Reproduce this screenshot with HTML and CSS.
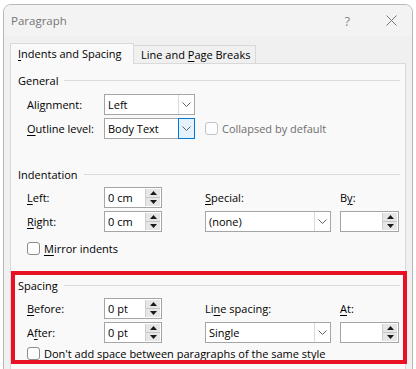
FILE: index.html
```html
<!DOCTYPE html>
<html>
<head>
<meta charset="utf-8">
<title>Paragraph</title>
<link rel="stylesheet" href="styles.css">
</head>
<body>
<div class="window">
	<div class="titlebar">
		<span class="title">Paragraph</span>
		<span class="help">?</span>
		<svg class="close" width="11" height="11" viewBox="0 0 11 11"><path d="M0.5 0.5 L10.5 10.5 M10.5 0.5 L0.5 10.5"/></svg>
	</div>
	<div class="body">
		<div class="tabs">
			<div class="tab active"><u>I</u>ndents and Spacing</div>
			<div class="tab">Line and <u>P</u>age Breaks</div>
		</div>
		<div class="panel">
			<div class="group-head">General</div>
			<div class="rows general">
				<label>Ali<u>g</u>nment:</label>
				<div class="combo">
					<span class="val">Left</span>
					<span class="drop"><svg width="9" height="5" viewBox="0 0 9 5"><path d="M0.5 0.5 L4.5 4.5 L8.5 0.5"/></svg></span>
				</div>
				<span></span>
				<label><u>O</u>utline level:</label>
				<div class="combo">
					<span class="val">Body Text</span>
					<span class="drop focus"><svg width="9" height="5" viewBox="0 0 9 5"><path d="M0.5 0.5 L4.5 4.5 L8.5 0.5"/></svg></span>
				</div>
				<div class="check disabled"><span class="box"></span>Collapsed by default</div>
			</div>

			<div class="group-head indent-head">Indentation</div>
			<div class="rows field">
				<label><u>L</u>eft:</label>
				<div class="spin">
					<span class="val">0 cm</span>
					<span class="btns">
						<span><svg width="7" height="4" viewBox="0 0 7 4"><path d="M0 4 L3.5 0 L7 4 Z"/></svg></span>
						<span><svg width="7" height="4" viewBox="0 0 7 4"><path d="M0 0 L3.5 4 L7 0 Z"/></svg></span>
					</span>
				</div>
				<label><u>S</u>pecial:</label>
				<label>B<u>y</u>:</label>
				<label><u>R</u>ight:</label>
				<div class="spin">
					<span class="val">0 cm</span>
					<span class="btns">
						<span><svg width="7" height="4" viewBox="0 0 7 4"><path d="M0 4 L3.5 0 L7 4 Z"/></svg></span>
						<span><svg width="7" height="4" viewBox="0 0 7 4"><path d="M0 0 L3.5 4 L7 0 Z"/></svg></span>
					</span>
				</div>
				<div class="combo wide">
					<span class="val">(none)</span>
					<span class="drop"><svg width="9" height="5" viewBox="0 0 9 5"><path d="M0.5 0.5 L4.5 4.5 L8.5 0.5"/></svg></span>
				</div>
				<div class="spin small">
					<span class="val"></span>
					<span class="btns">
						<span><svg width="7" height="4" viewBox="0 0 7 4"><path d="M0 4 L3.5 0 L7 4 Z"/></svg></span>
						<span><svg width="7" height="4" viewBox="0 0 7 4"><path d="M0 0 L3.5 4 L7 0 Z"/></svg></span>
					</span>
				</div>
			</div>
			<div class="check mirror"><span class="box"></span><span><u>M</u>irror indents</span></div>

			<div class="spacing">
				<div class="group-head">Spacing</div>
				<div class="rows field">
					<label><u>B</u>efore:</label>
					<div class="spin">
						<span class="val">0 pt</span>
						<span class="btns">
							<span><svg width="7" height="4" viewBox="0 0 7 4"><path d="M0 4 L3.5 0 L7 4 Z"/></svg></span>
							<span><svg width="7" height="4" viewBox="0 0 7 4"><path d="M0 0 L3.5 4 L7 0 Z"/></svg></span>
						</span>
					</div>
					<label>Li<u>n</u>e spacing:</label>
					<label><u>A</u>t:</label>
					<label>A<u>f</u>ter:</label>
					<div class="spin">
						<span class="val">0 pt</span>
						<span class="btns">
							<span><svg width="7" height="4" viewBox="0 0 7 4"><path d="M0 4 L3.5 0 L7 4 Z"/></svg></span>
							<span><svg width="7" height="4" viewBox="0 0 7 4"><path d="M0 0 L3.5 4 L7 0 Z"/></svg></span>
						</span>
					</div>
					<div class="combo wide">
						<span class="val">Single</span>
						<span class="drop"><svg width="9" height="5" viewBox="0 0 9 5"><path d="M0.5 0.5 L4.5 4.5 L8.5 0.5"/></svg></span>
					</div>
					<div class="spin small">
						<span class="val"></span>
						<span class="btns">
							<span><svg width="7" height="4" viewBox="0 0 7 4"><path d="M0 4 L3.5 0 L7 4 Z"/></svg></span>
							<span><svg width="7" height="4" viewBox="0 0 7 4"><path d="M0 0 L3.5 4 L7 0 Z"/></svg></span>
						</span>
					</div>
				</div>
				<div class="check nospace"><span class="box"></span><span>Don't add spa<u>c</u>e between paragraphs of the same style</span></div>
			</div>
		</div>
	</div>
</div>
</body>
</html>
```

FILE: styles.css
```css
* {
	box-sizing: border-box;
}
body {
	margin: 0;
	background: #fff;
	font-family: "Open Sans", "Noto Sans", sans-serif;
	font-size: 11px;
	color: #000;
	overflow: hidden;
}
u {
	text-underline-offset: 2px;
}
.window {
	margin: 4px 0 0 3px;
	width: 410px;
	height: 380px;
	border: 1px solid #b8b8b8;
	border-radius: 8px 8px 0 0;
	background: #f0f0f0;
	overflow: hidden;
}
.titlebar {
	height: 31px;
	background: #f3f3f3;
	display: flex;
	align-items: center;
	padding: 0 15px 0 7px;
}
.title {
	flex: 1;
	font-size: 11.5px;
	color: #767676;
}
.help {
	color: #8a8a8a;
	font-size: 13px;
	margin-right: 36px;
}
.close path {
	stroke: #777;
	stroke-width: 1;
	fill: none;
}
.body {
	padding: 7px 6px 0;
}
.tabs {
	display: flex;
	align-items: flex-end;
}
.tab {
	width: 122px;
	height: 18px;
	line-height: 17px;
	padding: 0 7px;
	border: 1px solid #d9d9d9;
	border-left: none;
	border-bottom: none;
	background: #f0f0f0;
	white-space: nowrap;
}
.tab.active {
	position: relative;
	z-index: 1;
	width: 124px;
	height: 21px;
	line-height: 20px;
	margin-bottom: -1px;
	border-left: 1px solid #d9d9d9;
	background: #f9f9f9;
}
.panel {
	height: 330px;
	padding: 8px 5px 0 7px;
	border: 1px solid #d9d9d9;
	background: #f9f9f9;
}
.group-head {
	display: flex;
	align-items: center;
	height: 16px;
}
.group-head::after {
	content: '';
	flex: 1;
	height: 1px;
	margin-left: 6px;
	background: #dcdcdc;
}
.indent-head {
	margin-top: 27px;
}
.rows {
	display: grid;
	grid-auto-rows: 21px;
	row-gap: 3px;
	margin-left: 9px;
}
.rows label {
	display: flex;
	align-items: center;
}
.general {
	grid-template-columns: 77px 91px 1fr;
	margin-top: 6px;
}
.field {
	grid-template-columns: 77px 101px 135px 59px;
	margin-top: 5px;
}
.combo, .spin {
	display: flex;
	border: 1px solid #a5a5a5;
	background: #fff;
}
.combo.wide {
	width: 126px;
}
.val {
	flex: 1;
	padding-left: 3px;
	line-height: 19px;
	white-space: nowrap;
}
.drop {
	width: 16px;
	display: flex;
	align-items: center;
	justify-content: center;
	border-left: 1px solid #dadada;
}
.drop path {
	stroke: #606060;
	stroke-width: 1;
	fill: none;
}
.drop.focus {
	width: 17px;
	margin: -1px -1px -1px 0;
	border: 1px solid #0078d4;
	background: #e5f1fb;
}
.spin {
	width: 58px;
}
.spin.small {
	width: 59px;
}
.btns {
	width: 15px;
	margin: 1px 1px 1px 0;
	display: flex;
	flex-direction: column;
	background: #e6e6e6;
	border-left: 1px solid #cfcfcf;
}
.btns span {
	flex: 1;
	display: flex;
	align-items: center;
	justify-content: center;
}
.btns span + span {
	border-top: 1px solid #c6c6c6;
}
.btns path {
	fill: #1a1a1a;
}
.check {
	display: flex;
	align-items: center;
	gap: 4px;
	height: 13px;
}
.box {
	width: 13px;
	height: 13px;
	border: 1px solid #8c8c8c;
	border-radius: 3px;
	background: #fdfdfd;
}
.general .check {
	align-self: center;
	margin-left: 10px;
}
.disabled {
	color: #6e6e6e;
}
.disabled .box {
	border-color: #c4c4c4;
}
.mirror {
	margin: 10px 0 0 9px;
}
.spacing {
	position: relative;
	margin-top: 22px;
}
.spacing::after {
	content: '';
	position: absolute;
	left: -7px;
	right: -7px;
	top: -6px;
	bottom: -4px;
	border: 4px solid #e81123;
}
.nospace {
	margin: 4px 0 0 9px;
}
```
